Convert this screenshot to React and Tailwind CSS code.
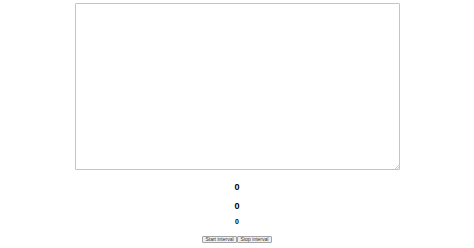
export default function App() {
  return (
    <div className="flex flex-col items-center bg-white w-[474px] h-[248px] font-['Liberation_Sans',Arial,sans-serif] text-black">
      <div className="relative mt-[3px] w-[325px] h-[167px]">
        <textarea className="block w-full h-full border border-[#c4c4c4] rounded-[1px] bg-white outline-none resize-none" />
        <svg className="absolute right-[1px] bottom-[1px]" width="5" height="5" viewBox="0 0 5 5">
          <path d="M1 5L5 1M3 5L5 3" stroke="#b5b5b5" strokeWidth="0.6" />
        </svg>
      </div>
      <p className="mt-[12px] text-[9px] leading-[10px] font-bold">0</p>
      <p className="mt-[9px] text-[9px] leading-[10px] font-bold">0</p>
      <p className="mt-[7px] text-[7px] leading-[8px] font-bold">0</p>
      <div className="mt-[10px] flex">
        <button className="w-[35px] h-[7px] flex items-center justify-center text-[5px] leading-none bg-[#efefef] border-[0.5px] border-[#a3a3a3] rounded-[1px] text-[#333] whitespace-nowrap">
          Start interval
        </button>
        <button className="w-[35px] h-[7px] flex items-center justify-center text-[5px] leading-none bg-[#efefef] border-[0.5px] border-[#a3a3a3] rounded-[1px] text-[#333] whitespace-nowrap">
          Stop interval
        </button>
      </div>
    </div>
  );
}
